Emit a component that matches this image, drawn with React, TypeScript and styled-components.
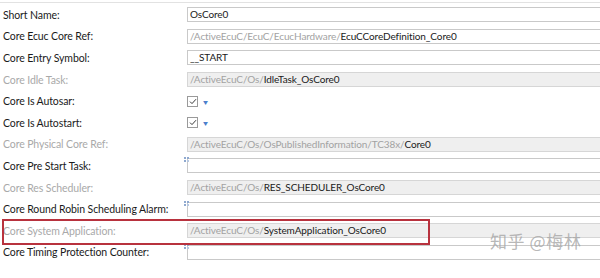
import React from "react";
import styled, { createGlobalStyle } from "styled-components";

const GlobalStyle = createGlobalStyle`
  html, body {
    margin: 0;
    padding: 0;
    background: #ffffff;
    overflow: hidden;
  }
  body {
    font-family: Lato, "Open Sans", "Noto Sans CJK SC", sans-serif;
  }
`;

const Page = styled.div`
  position: relative;
  width: 600px;
  height: 278px;
  overflow: hidden;
  background: #fff;
`;

const TopRule = styled.div`
  height: 2px;
  border-bottom: 1px solid #e2e2e2;
  margin-bottom: 1px;
`;

const Form = styled.div`
  display: flex;
  flex-direction: column;
`;

const Row = styled.div`
  display: grid;
  grid-template-columns: 187px 430px;
  align-items: center;
  height: 21.6px;
`;

const Label = styled.div<{ $disabled?: boolean }>`
  padding-left: 3px;
  font-size: 10.5px;
  letter-spacing: -0.1px;
  color: ${(p) => (p.$disabled ? "#a9a9a9" : "#1a1a1a")};
  white-space: nowrap;
`;

const Field = styled.div<{ $disabled?: boolean }>`
  position: relative;
  box-sizing: border-box;
  height: 15px;
  border: 1px solid ${(p) => (p.$disabled ? "#d6d6d6" : "#c9c9c9")};
  background: ${(p) => (p.$disabled ? "#efefef" : "#ffffff")};
  padding-left: 2px;
  font-size: 10px;
  letter-spacing: -0.1px;
  line-height: 13px;
  color: #1a1a1a;
  white-space: nowrap;
`;

const PathPrefix = styled.span`
  color: #a2a2a2;
`;

const Marker = styled.svg`
  position: absolute;
  left: -4px;
  top: -2px;
`;

const CheckCell = styled.div`
  display: flex;
  align-items: center;
  gap: 5px;
`;

const Box = styled.div`
  box-sizing: border-box;
  width: 11px;
  height: 11px;
  border: 1px solid #9a9a9a;
  background: #fff;
  display: flex;
  align-items: center;
  justify-content: center;
`;

const Caret = styled.span`
  font-size: 5px;
  color: #4c7fcc;
`;

const Highlight = styled.div`
  position: absolute;
  left: 2px;
  top: 219px;
  width: 428px;
  height: 26px;
  box-sizing: border-box;
  border: 2px solid #b8323e;
`;

const Watermark = styled.div`
  position: absolute;
  left: 490px;
  top: 228px;
  font-family: "Noto Sans CJK SC", "Noto Sans", sans-serif;
  font-size: 17px;
  color: rgba(165, 165, 165, 0.8);
  letter-spacing: 0.6px;
`;

type Item = {
  label: string;
  disabled?: boolean;
  kind: "text" | "check" | "empty";
  prefix?: string;
  value?: string;
};

const items: Item[] = [
  { label: "Short Name:", kind: "text", value: "OsCore0" },
  {
    label: "Core Ecuc Core Ref:",
    kind: "text",
    prefix: "/ActiveEcuC/EcuC/EcucHardware/",
    value: "EcuCCoreDefinition_Core0",
  },
  { label: "Core Entry Symbol:", kind: "text", value: "__START" },
  {
    label: "Core Idle Task:",
    disabled: true,
    kind: "text",
    prefix: "/ActiveEcuC/Os/",
    value: "IdleTask_OsCore0",
  },
  { label: "Core Is Autosar:", kind: "check" },
  { label: "Core Is Autostart:", kind: "check" },
  {
    label: "Core Physical Core Ref:",
    disabled: true,
    kind: "text",
    prefix: "/ActiveEcuC/Os/OsPublishedInformation/TC38x/",
    value: "Core0",
  },
  { label: "Core Pre Start Task:", kind: "empty" },
  {
    label: "Core Res Scheduler:",
    disabled: true,
    kind: "text",
    prefix: "/ActiveEcuC/Os/",
    value: "RES_SCHEDULER_OsCore0",
  },
  { label: "Core Round Robin Scheduling Alarm:", kind: "empty" },
  {
    label: "Core System Application:",
    disabled: true,
    kind: "text",
    prefix: "/ActiveEcuC/Os/",
    value: "SystemApplication_OsCore0",
  },
  { label: "Core Timing Protection Counter:", kind: "empty" },
];

const AssistMarker = () => (
  <Marker width="5" height="5" viewBox="0 0 5 5">
    <rect x="0" y="0" width="2" height="2" fill="#8fa9cf" />
    <rect x="3" y="0" width="2" height="2" fill="#8fa9cf" />
    <rect x="0" y="3" width="2" height="2" fill="#8fa9cf" />
    <rect x="3" y="3" width="2" height="2" fill="#b7c8e0" />
  </Marker>
);

const CheckBox = () => (
  <CheckCell>
    <Box>
      <svg width="8" height="7" viewBox="0 0 8 7">
        <path d="M1 3.6 L3 5.6 L7 1.2" fill="none" stroke="#3a3a3a" strokeWidth="1" />
      </svg>
    </Box>
    <Caret>▼</Caret>
  </CheckCell>
);

const App: React.FC = () => {
  return (
    <Page>
      <GlobalStyle />
      <TopRule />
      <Form>
        {items.map((item) => (
          <Row key={item.label}>
            <Label $disabled={item.disabled}>{item.label}</Label>
            {item.kind === "check" ? (
              <CheckBox />
            ) : (
              <Field $disabled={item.disabled}>
                {item.kind === "empty" && <AssistMarker />}
                {item.prefix && <PathPrefix>{item.prefix}</PathPrefix>}
                {item.value}
              </Field>
            )}
          </Row>
        ))}
      </Form>
      <Highlight />
      <Watermark>知乎 @梅林</Watermark>
    </Page>
  );
};

export default App;
